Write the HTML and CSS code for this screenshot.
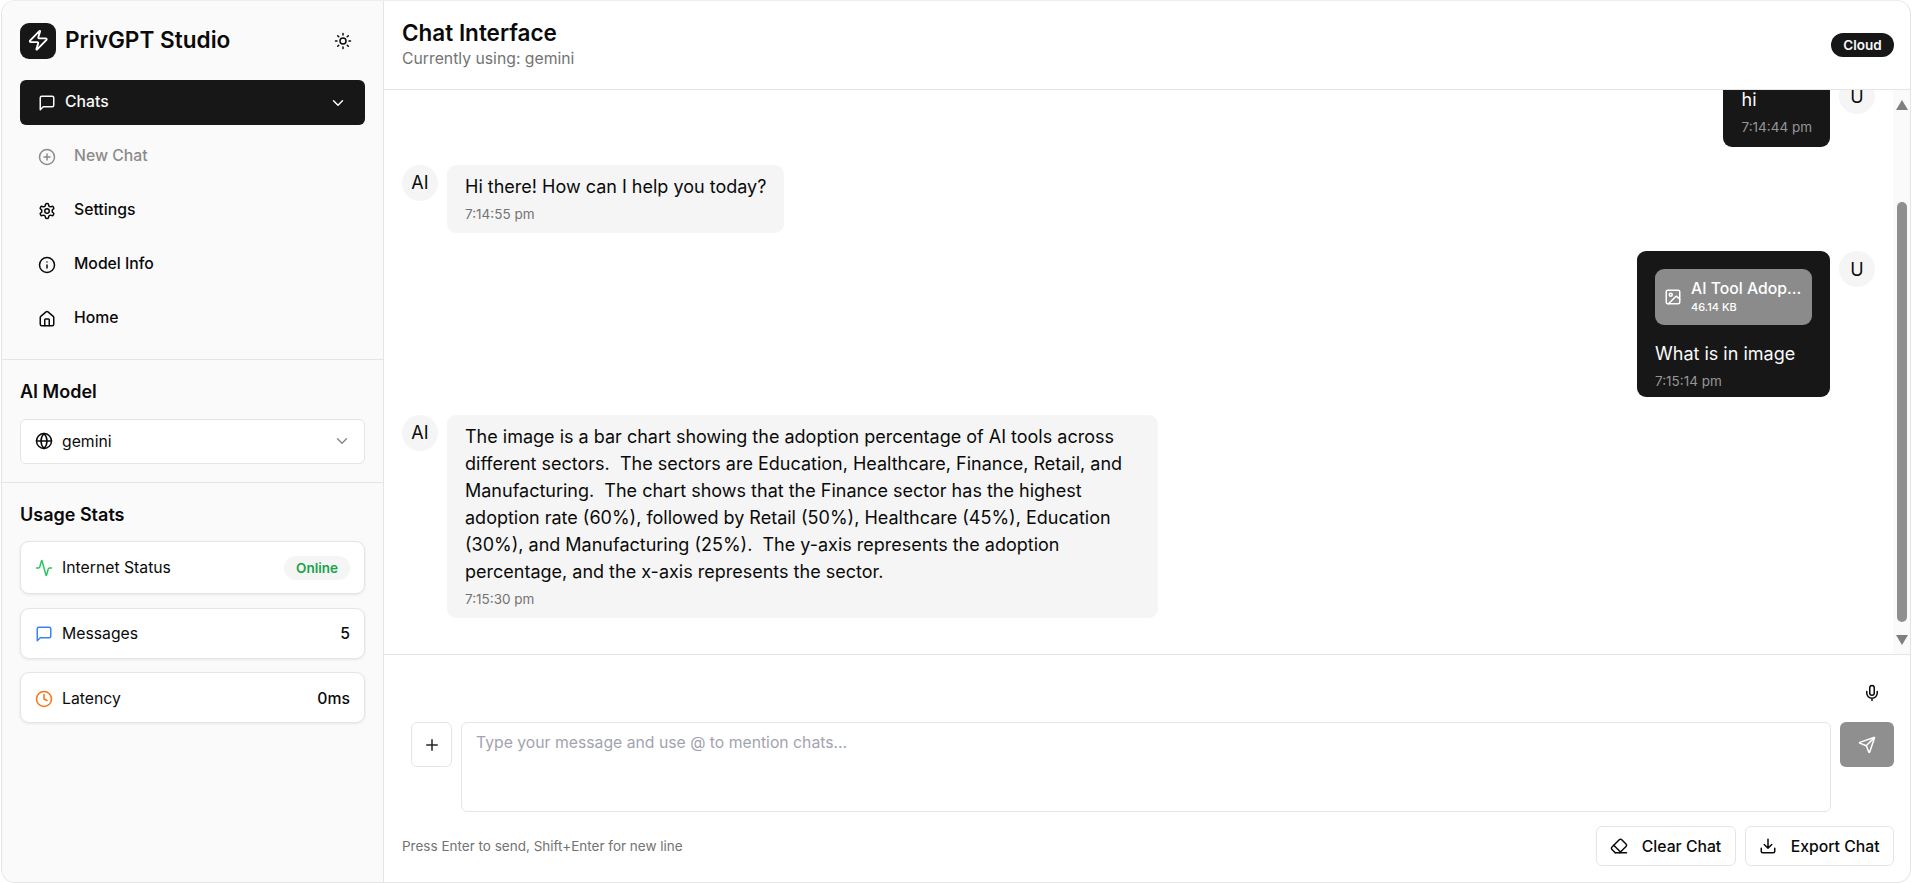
FILE: index.html
```html
<!DOCTYPE html>
<html lang="en">
<head>
  <meta charset="UTF-8" />
  <meta name="viewport" content="width=device-width, initial-scale=1.0"/>
  <title>PrivGPT Studio - Chat</title>
  <link rel="stylesheet" href="styles.css">
</head>
<body>
  <div class="app">
    <aside class="sidebar">
      <div class="side-top">
        <div class="brand">
          <div class="brand-logo">
            <svg class="icon icon-logo" viewBox="0 0 24 24"><path d="M4 14a1 1 0 0 1-.78-1.63l9.9-10.2a.5.5 0 0 1 .86.46l-1.92 6.02A1 1 0 0 0 13 10h7a1 1 0 0 1 .78 1.63l-9.9 10.2a.5.5 0 0 1-.86-.46l1.92-6.02A1 1 0 0 0 11 14z"/></svg>
          </div>
          <span class="brand-name">PrivGPT Studio</span>
          <svg class="icon icon-sun" viewBox="0 0 24 24"><circle cx="12" cy="12" r="4"/><path d="M12 2v2M12 20v2M4.93 4.93l1.41 1.41M17.66 17.66l1.41 1.41M2 12h2M20 12h2M6.34 17.66l-1.41 1.41M19.07 4.93l-1.41 1.41"/></svg>
        </div>

        <div class="chats-btn">
          <svg class="icon" viewBox="0 0 24 24"><path d="M21 15a2 2 0 0 1-2 2H7l-4 4V5a2 2 0 0 1 2-2h14a2 2 0 0 1 2 2z"/></svg>
          <span class="chats-label">Chats</span>
          <svg class="icon" viewBox="0 0 24 24"><path d="m6 9 6 6 6-6"/></svg>
        </div>

        <nav class="nav">
          <div class="nav-item muted">
            <svg class="icon" viewBox="0 0 24 24"><circle cx="12" cy="12" r="10"/><path d="M8 12h8M12 8v8"/></svg>
            <span class="nav-label">New Chat</span>
          </div>
          <div class="nav-item">
            <svg class="icon" viewBox="0 0 24 24"><path d="M12.22 2h-.44a2 2 0 0 0-2 2v.18a2 2 0 0 1-1 1.73l-.43.25a2 2 0 0 1-2 0l-.15-.08a2 2 0 0 0-2.73.73l-.22.38a2 2 0 0 0 .73 2.73l.15.1a2 2 0 0 1 1 1.72v.51a2 2 0 0 1-1 1.74l-.15.09a2 2 0 0 0-.73 2.73l.22.38a2 2 0 0 0 2.73.73l.15-.08a2 2 0 0 1 2 0l.43.25a2 2 0 0 1 1 1.73V20a2 2 0 0 0 2 2h.44a2 2 0 0 0 2-2v-.18a2 2 0 0 1 1-1.73l.43-.25a2 2 0 0 1 2 0l.15.08a2 2 0 0 0 2.73-.73l.22-.39a2 2 0 0 0-.73-2.73l-.15-.08a2 2 0 0 1-1-1.74v-.5a2 2 0 0 1 1-1.74l.15-.09a2 2 0 0 0 .73-2.73l-.22-.38a2 2 0 0 0-2.73-.73l-.15.08a2 2 0 0 1-2 0l-.43-.25a2 2 0 0 1-1-1.73V4a2 2 0 0 0-2-2z"/><circle cx="12" cy="12" r="3"/></svg>
            <span class="nav-label">Settings</span>
          </div>
          <div class="nav-item">
            <svg class="icon" viewBox="0 0 24 24"><circle cx="12" cy="12" r="10"/><path d="M12 16v-4M12 8h.01"/></svg>
            <span class="nav-label">Model Info</span>
          </div>
          <div class="nav-item">
            <svg class="icon" viewBox="0 0 24 24"><path d="M15 21v-8a1 1 0 0 0-1-1h-4a1 1 0 0 0-1 1v8"/><path d="M3 10a2 2 0 0 1 .709-1.528l7-5.999a2 2 0 0 1 2.582 0l7 5.999A2 2 0 0 1 21 10v9a2 2 0 0 1-2 2H5a2 2 0 0 1-2-2z"/></svg>
            <span class="nav-label">Home</span>
          </div>
        </nav>
      </div>

      <section class="side-section model-section">
        <h3 class="side-title">AI Model</h3>
        <div class="model-select">
          <svg class="icon" viewBox="0 0 24 24"><circle cx="12" cy="12" r="10"/><path d="M12 2a14.5 14.5 0 0 0 0 20 14.5 14.5 0 0 0 0-20M2 12h20"/></svg>
          <span class="model-name">gemini</span>
          <svg class="icon icon-chev" viewBox="0 0 24 24"><path d="m6 9 6 6 6-6"/></svg>
        </div>
      </section>

      <section class="side-section">
        <h3 class="side-title">Usage Stats</h3>
        <div class="stat-card">
          <svg class="icon green" viewBox="0 0 24 24"><path d="M22 12h-2.48a2 2 0 0 0-1.93 1.46l-2.35 8.36a.25.25 0 0 1-.48 0L9.24 2.18a.25.25 0 0 0-.48 0l-2.35 8.36A2 2 0 0 1 4.49 12H2"/></svg>
          <span class="stat-label">Internet Status</span>
          <span class="status-pill">Online</span>
        </div>
        <div class="stat-card">
          <svg class="icon blue" viewBox="0 0 24 24"><path d="M21 15a2 2 0 0 1-2 2H7l-4 4V5a2 2 0 0 1 2-2h14a2 2 0 0 1 2 2z"/></svg>
          <span class="stat-label">Messages</span>
          <span class="stat-value">5</span>
        </div>
        <div class="stat-card">
          <svg class="icon orange" viewBox="0 0 24 24"><circle cx="12" cy="12" r="10"/><path d="M12 6v6l4 2"/></svg>
          <span class="stat-label">Latency</span>
          <span class="stat-value">0ms</span>
        </div>
      </section>
    </aside>

    <main class="main">
      <header class="topbar">
        <div class="top-text">
          <h1 class="page-title">Chat Interface</h1>
          <p class="page-sub">Currently using: gemini</p>
        </div>
        <span class="badge">Cloud</span>
      </header>

      <div class="chat-wrap">
        <div class="messages">
          <div class="msg msg-user">
            <div class="bubble">
              <div class="bubble-text">hi</div>
              <div class="bubble-time">7:14:44 pm</div>
            </div>
            <div class="avatar">U</div>
          </div>

          <div class="msg">
            <div class="avatar">AI</div>
            <div class="bubble">
              <div class="bubble-text">Hi there! How can I help you today?</div>
              <div class="bubble-time">7:14:55 pm</div>
            </div>
          </div>

          <div class="msg msg-user">
            <div class="bubble bubble-file">
              <div class="attachment">
                <svg class="icon icon-white" viewBox="0 0 24 24"><rect x="3" y="3" width="18" height="18" rx="2"/><circle cx="9" cy="9" r="2"/><path d="m21 15-3.086-3.086a2 2 0 0 0-2.828 0L6 21"/></svg>
                <div class="att-info">
                  <div class="att-name">AI Tool Adop...</div>
                  <div class="att-size">46.14 KB</div>
                </div>
              </div>
              <div class="bubble-text">What is in image</div>
              <div class="bubble-time">7:15:14 pm</div>
            </div>
            <div class="avatar">U</div>
          </div>

          <div class="msg">
            <div class="avatar">AI</div>
            <div class="bubble bubble-long">
              <div class="bubble-text">The image is a bar chart showing the adoption percentage of AI tools across different sectors.&nbsp; The sectors are Education, Healthcare, Finance, Retail, and Manufacturing.&nbsp; The chart shows that the Finance sector has the highest adoption rate (60%), followed by Retail (50%), Healthcare (45%), Education (30%), and Manufacturing (25%).&nbsp; The y-axis represents the adoption percentage, and the x-axis represents the sector.</div>
              <div class="bubble-time">7:15:30 pm</div>
            </div>
          </div>
        </div>

        <div class="scrollbar">
          <span class="arrow arrow-up"></span>
          <div class="scroll-track"><div class="scroll-thumb"></div></div>
          <span class="arrow arrow-down"></span>
        </div>
      </div>

      <footer class="composer">
        <div class="mic-row">
          <svg class="icon" viewBox="0 0 24 24"><path d="M12 2a3 3 0 0 0-3 3v7a3 3 0 0 0 6 0V5a3 3 0 0 0-3-3Z"/><path d="M19 10v2a7 7 0 0 1-14 0v-2M12 19v3"/></svg>
        </div>
        <div class="input-row">
          <div class="attach-btn">
            <svg class="icon" viewBox="0 0 24 24"><path d="M5 12h14M12 5v14"/></svg>
          </div>
          <textarea class="input" placeholder="Type your message and use @ to mention chats..."></textarea>
          <div class="send-btn">
            <svg class="icon icon-white" viewBox="0 0 24 24"><path d="M14.536 21.686a.5.5 0 0 0 .937-.024l6.5-19a.496.496 0 0 0-.635-.635l-19 6.5a.5.5 0 0 0-.024.937l7.93 3.18a2 2 0 0 1 1.112 1.11z"/><path d="m21.854 2.147-10.94 10.939"/></svg>
          </div>
        </div>
        <div class="composer-foot">
          <span class="hint">Press Enter to send, Shift+Enter for new line</span>
          <div class="actions">
            <div class="action-btn">
              <svg class="icon" viewBox="0 0 24 24"><path d="m7 21-4.3-4.3c-1-1-1-2.5 0-3.4l9.6-9.6c1-1 2.5-1 3.4 0l5.6 5.6c1 1 1 2.5 0 3.4L13 21"/><path d="M22 21H7M5 11l9 9"/></svg>
              Clear Chat
            </div>
            <div class="action-btn">
              <svg class="icon" viewBox="0 0 24 24"><path d="M21 15v4a2 2 0 0 1-2 2H5a2 2 0 0 1-2-2v-4"/><path d="m7 10 5 5 5-5M12 15V3"/></svg>
              Export Chat
            </div>
          </div>
        </div>
      </footer>
    </main>
  </div>
</body>
</html>
```

FILE: styles.css
```css
* {
  box-sizing: border-box;
}
html, body {
  height: 100%;
  margin: 0;
  background: #fff;
}
body {
  font-family: Inter, "Noto Sans", sans-serif;
  color: #0a0a0a;
  overflow: hidden;
}
.app {
  display: flex;
  height: 883px;
  margin: 0 1px;
  border: 1px solid #e5e5e5;
  border-top: 1px solid #eee;
  border-radius: 14px;
  overflow: hidden;
  background: #fff;
}
.icon {
  width: 18px;
  height: 18px;
  flex: none;
  fill: none;
  stroke: currentColor;
  stroke-width: 2;
  stroke-linecap: round;
  stroke-linejoin: round;
}
.icon-white {
  color: #fff;
}
.green { color: #22c55e; }
.blue { color: #3b82f6; }
.orange { color: #f97316; }

/* sidebar */
.sidebar {
  width: 382px;
  flex: none;
  background: #fafafa;
  border-right: 1px solid #e5e5e5;
}
.side-top {
  padding: 21px 18px 0 18px;
}
.brand {
  display: flex;
  align-items: center;
  height: 37px;
}
.brand-logo {
  width: 36px;
  height: 36px;
  border-radius: 9px;
  background: #171717;
  display: flex;
  align-items: center;
  justify-content: center;
  color: #fff;
}
.icon-logo {
  width: 22.5px;
  height: 22.5px;
}
.brand-name {
  margin-left: 9px;
  margin-bottom: 2px;
  font-size: 22.6px;
  font-weight: 600;
  flex: 1;
}
.icon-sun {
  margin-right: 13px;
}
.chats-btn {
  margin-top: 21px;
  height: 45px;
  display: flex;
  align-items: center;
  gap: 9px;
  padding: 0 18px;
  background: #171717;
  border-radius: 6px;
  color: #fafafa;
  font-size: 15.75px;
  font-weight: 500;
}
.chats-label {
  flex: 1;
  margin-bottom: 2px;
}
.nav {
  margin: 9px -18px 0;
  padding: 0 18px 9px;
  border-bottom: 1px solid #e5e5e5;
}
.nav-item {
  height: 45px;
  margin-bottom: 9px;
  display: flex;
  align-items: center;
  gap: 18px;
  padding: 0 18px;
  font-size: 15.75px;
  font-weight: 500;
}
.nav-label {
  margin-bottom: 2px;
}
.nav-item.muted {
  color: #8b8b8b;
}
.side-section {
  padding: 18px 18px 18px;
}
.model-section {
  border-bottom: 1px solid #e5e5e5;
}
.side-title {
  margin: 0 0 13.5px;
  font-size: 18px;
  line-height: 27px;
  font-weight: 600;
}
.model-select {
  height: 45px;
  display: flex;
  align-items: center;
  gap: 9px;
  padding: 0 13px 0 14px;
  background: #fff;
  border: 1px solid #e5e5e5;
  border-radius: 6px;
  font-size: 15.75px;
}
.model-name {
  flex: 1;
}
.icon-chev {
  color: #8b8b8b;
}
.stat-card {
  margin-bottom: 13.5px;
  display: flex;
  align-items: center;
  gap: 9px;
  padding: 13.5px 14px;
  background: #fff;
  border: 1px solid #e5e5e5;
  border-radius: 9px;
  box-shadow: 0 1px 3px rgba(0,0,0,0.08);
  font-size: 15.75px;
  line-height: 22px;
}
.stat-card + .stat-card {
  padding-top: 14.5px;
  padding-bottom: 12.5px;
}
.stat-label {
  flex: 1;
}
.stat-value {
  font-weight: 500;
}
.status-pill {
  height: 24px;
  padding: 0 12px;
  border-radius: 12px;
  background: #f5f5f5;
  color: #16a34a;
  font-size: 13.5px;
  line-height: 24px;
  font-weight: 600;
}

/* main column */
.main {
  flex: 1;
  min-width: 0;
  display: flex;
  flex-direction: column;
}
.topbar {
  height: 89px;
  flex: none;
  display: flex;
  align-items: center;
  justify-content: space-between;
  padding: 0 16px 0 18px;
  border-bottom: 1px solid #e5e5e5;
}
.top-text {
  margin-bottom: 2px;
}
.page-title {
  margin: 0;
  font-size: 22.5px;
  line-height: 30px;
  font-weight: 600;
}
.page-sub {
  margin: 0;
  font-size: 15.75px;
  line-height: 22px;
  color: #737373;
}
.badge {
  height: 24px;
  padding: 0 12.4px;
  border-radius: 12px;
  background: #171717;
  color: #fafafa;
  font-size: 13.5px;
  line-height: 24px;
  font-weight: 600;
}
.chat-wrap {
  flex: 1;
  min-height: 0;
  display: flex;
  border-bottom: 1px solid #e5e5e5;
}
.messages {
  flex: 1;
  min-width: 0;
  overflow: hidden;
  display: flex;
  flex-direction: column;
  justify-content: flex-end;
  gap: 18px;
  padding: 0 18px 36px;
}
.msg {
  display: flex;
  gap: 9px;
  align-items: flex-start;
  flex: none;
}
.msg-user {
  justify-content: flex-end;
}
.avatar {
  width: 36px;
  height: 36px;
  flex: none;
  border-radius: 50%;
  background: #f5f5f5;
  display: flex;
  align-items: center;
  justify-content: center;
  font-size: 18px;
}
.bubble {
  padding: 8px 18px 9px;
  border-radius: 9px;
  background: #f5f5f5;
}
.msg-user .bubble {
  background: #171717;
  color: #fafafa;
}
.msg-user .bubble-file {
  padding-bottom: 5px;
}
.bubble-long {
  max-width: 711px;
}
.bubble-text {
  font-size: 18px;
  line-height: 27px;
}
.bubble-time {
  margin-top: 4.25px;
  font-size: 13.5px;
  line-height: 20.25px;
  color: #737373;
}
.msg-user .bubble-time {
  color: #969696;
}
.attachment {
  display: flex;
  align-items: center;
  gap: 9px;
  width: 157px;
  height: 56px;
  margin: 10px 0 15px;
  padding: 0 9px;
  border-radius: 9px;
  background: #8b8b8b;
  color: #fff;
}
.att-info {
  margin-bottom: 2px;
}
.att-name {
  font-size: 15.75px;
  font-weight: 500;
  line-height: 23px;
}
.att-size {
  font-size: 11px;
  font-weight: 500;
  line-height: 15px;
}
.scrollbar {
  width: 17px;
  flex: none;
  display: flex;
  flex-direction: column;
  align-items: center;
  background: #fafafa;
}
.arrow {
  flex: none;
  width: 0;
  height: 0;
  border-left: 6px solid transparent;
  border-right: 6px solid transparent;
}
.arrow-up {
  margin-top: 10px;
  border-bottom: 10px solid #7f7f7f;
}
.arrow-down {
  margin-bottom: 9px;
  border-top: 10px solid #7f7f7f;
}
.scroll-track {
  flex: 1;
  width: 100%;
  padding: 0 3.5px;
  display: flex;
  align-items: flex-end;
}
.scroll-thumb {
  width: 100%;
  height: 420px;
  margin-bottom: 13px;
  border-radius: 5px;
  background: #8f8f8f;
}

/* composer */
.composer {
  flex: none;
  height: 227px;
  padding: 0 16px 0 18px;
}
.mic-row {
  height: 67px;
  display: flex;
  align-items: center;
  justify-content: flex-end;
  padding-right: 13px;
  padding-top: 9px;
}
.input-row {
  display: flex;
  align-items: flex-start;
  gap: 9px;
  padding-left: 9px;
}
.attach-btn {
  width: 41px;
  height: 45px;
  flex: none;
  display: flex;
  align-items: center;
  justify-content: center;
  border: 1px solid #e5e5e5;
  border-radius: 6px;
  color: #262626;
}
.input {
  flex: 1;
  height: 90px;
  padding: 9px 14px;
  border: 1px solid #e5e5e5;
  border-radius: 6px;
  font-family: inherit;
  font-size: 15.75px;
  line-height: 22px;
  resize: none;
  outline: none;
}
.input::placeholder {
  color: #a3a3af;
}
.send-btn {
  width: 54px;
  height: 45px;
  flex: none;
  display: flex;
  align-items: center;
  justify-content: center;
  border-radius: 6px;
  background: #8f8f8f;
}
.composer-foot {
  margin-top: 14px;
  display: flex;
  align-items: center;
  justify-content: space-between;
}
.hint {
  font-size: 13.5px;
  color: #737373;
  margin-bottom: 1px;
}
.actions {
  display: flex;
  gap: 9px;
}
.action-btn {
  height: 40px;
  display: flex;
  align-items: center;
  gap: 13.5px;
  padding: 0 13.5px;
  border: 1px solid #e5e5e5;
  border-radius: 6px;
  font-size: 15.75px;
  font-weight: 500;
}
```
